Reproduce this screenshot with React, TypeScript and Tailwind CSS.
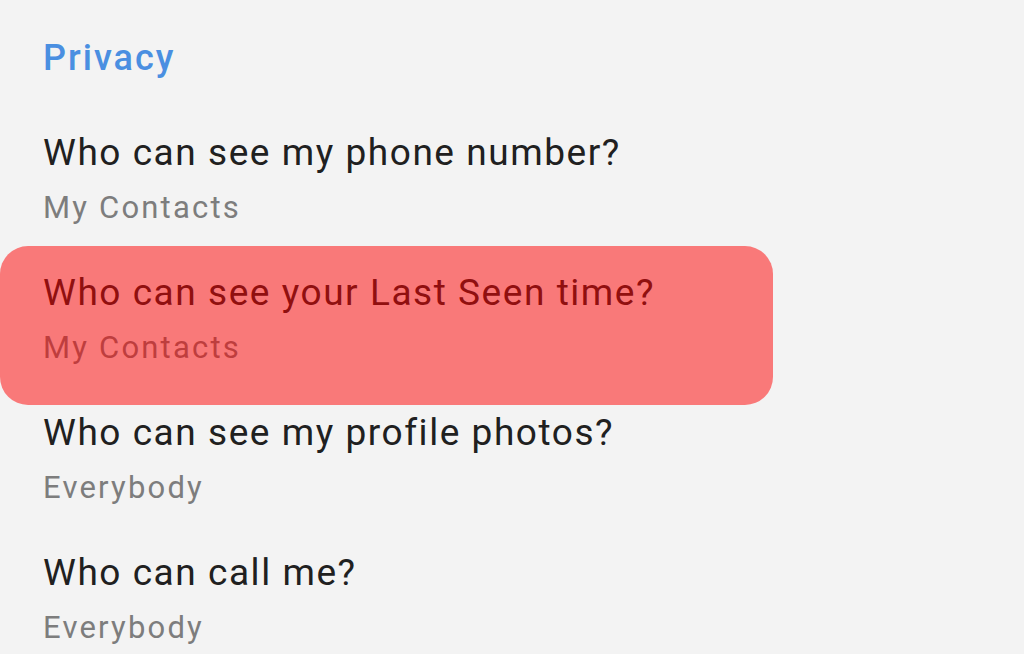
const ROWS = [
  { title: 'Who can see my phone number?', value: 'My Contacts' },
  { title: 'Who can see your Last Seen time?', value: 'My Contacts', marked: true },
  { title: 'Who can see my profile photos?', value: 'Everybody' },
  { title: 'Who can call me?', value: 'Everybody' },
];

export default function App() {
  return (
    <div
      className="h-[654px] w-[1024px] overflow-hidden bg-[#f3f3f3]"
      style={{ fontFamily: 'Roboto, "Noto Sans", sans-serif' }}
    >
      <div className="px-[43px] pt-[36px] pb-[30px]">
        <h2 className="text-[36px] leading-[44px] font-medium tracking-[2px] text-[#4a8fe1]">Privacy</h2>
      </div>

      <div className="flex flex-col">
        {ROWS.map((r) => (
          <div key={r.title} className="relative h-[140px] px-[43px] pt-[21px]">
            <div className="text-[37px] leading-[44px] tracking-[1.55px] text-[#202020]">{r.title}</div>
            <div className="mt-[13px] text-[31px] leading-[40px] tracking-[2.2px] text-[#7d7d7d]">
              {r.value}
            </div>
            {r.marked && (
              <div className="absolute top-[-4px] left-0 h-[159px] w-[773px] rounded-[28px] bg-[rgba(255,0,0,0.5)]" />
            )}
          </div>
        ))}
      </div>
    </div>
  );
}
